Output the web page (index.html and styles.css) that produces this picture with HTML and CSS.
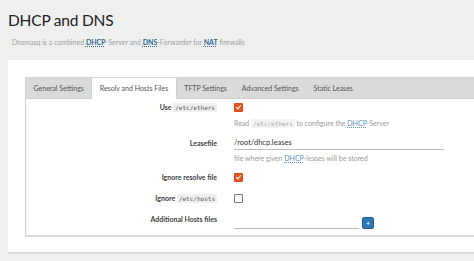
FILE: index.html
```html
<!DOCTYPE html>
<html lang="en">
<head>
    <meta charset="UTF-8">
    <title>DHCP and DNS</title>
    <link rel="stylesheet" href="styles.css">
</head>
<body>
    <div class="page-head">
        <h1>DHCP and DNS</h1>
        <p class="map-descr">Dnsmasq is a combined <abbr>DHCP</abbr>-Server and <abbr>DNS</abbr>-Forwarder for <abbr>NAT</abbr> firewalls</p>
    </div>
    <div class="cbi-map">
        <div class="cbi-section">
            <ul class="tabs">
                <li>General Settings</li>
                <li class="active">Resolv and Hosts Files</li>
                <li>TFTP Settings</li>
                <li>Advanced Settings</li>
                <li>Static Leases</li>
            </ul>
            <div class="fields">
                <div class="row">
                    <label>Use <code>/etc/ethers</code></label>
                    <div class="value">
                        <span class="check on"></span>
                        <div class="help first">Read <code>/etc/ethers</code> to configure the <abbr class="light">DHCP</abbr>-Server</div>
                    </div>
                </div>
                <div class="row">
                    <label>Leasefile</label>
                    <div class="value">
                        <div class="input long">/root/dhcp.leases</div>
                        <div class="help">file where given <abbr class="light">DHCP</abbr>-leases will be stored</div>
                    </div>
                </div>
                <div class="row">
                    <label>Ignore resolve file</label>
                    <div class="value"><span class="check on"></span></div>
                </div>
                <div class="row">
                    <label>Ignore <code>/etc/hosts</code></label>
                    <div class="value"><span class="check"></span></div>
                </div>
                <div class="row last">
                    <label>Additional Hosts files</label>
                    <div class="value inline">
                        <div class="input short"></div>
                        <button>+</button>
                    </div>
                </div>
            </div>
        </div>
    </div>
</body>
</html>
```

FILE: styles.css
```css
body {
    font-family: 'Lato', 'Liberation Sans', sans-serif;
    margin: 0;
    padding: 0;
    background: #efefef;
    color: #404040;
    overflow: hidden;
}

.page-head {
    padding: 10px 8px 0 8px;
    height: 50px;
}

h1 {
    font-size: 15.5px;
    font-weight: normal;
    color: #222;
    margin: 0;
    line-height: 20px;
    letter-spacing: -0.2px;
}

.map-descr {
    font-size: 7px;
    color: #a0a0a0;
    margin: 8px 0 0 4px;
}

abbr {
    color: #2c6a93;
    font-weight: bold;
    text-decoration: underline;
    text-decoration-style: dotted;
}

abbr.light {
    font-weight: normal;
    color: #5a8fbf;
}

.cbi-map {
    background: #fff;
    margin-left: 8px;
    padding: 17px 0 15px 17px;
    border-bottom: 2px solid #dcdcdc;
}

.cbi-section {
    border: 1px solid #d4d4d4;
    border-right: none;
    border-bottom: 2px solid #d8d8d8;
    padding-bottom: 6px;
}

.tabs {
    list-style: none;
    margin: 0;
    padding: 0;
    display: flex;
    background: #dadada;
    height: 20px;
    border-bottom: 1px solid #cfcfcf;
}

.tabs li {
    font-size: 7px;
    color: #555;
    padding: 0 7.5px;
    line-height: 20px;
}

.tabs li.active {
    background: #fff;
    border-left: 1px solid #cfcfcf;
    border-right: 1px solid #cfcfcf;
    height: 21px;
}

.fields {
    padding-top: 2px;
}

.row {
    display: grid;
    grid-template-columns: 191px 1fr;
    column-gap: 17px;
    margin-bottom: 8px;
}

.row.last {
    margin-top: 8px;
    margin-bottom: 0;
}

.row label {
    text-align: right;
    font-size: 7px;
    font-weight: bold;
    color: #404040;
    line-height: 13px;
}

.row label code {
    font-weight: normal;
}

code {
    font-family: 'DejaVu Sans Mono', monospace;
    font-size: 6px;
    background: #efefef;
    padding: 1px 2px;
    color: #555;
}

.value {
    font-size: 7px;
}

.value.inline {
    display: flex;
    align-items: flex-end;
    gap: 3px;
    padding-top: 3px;
}

.check {
    display: block;
    width: 7px;
    height: 7px;
    margin-top: 2px;
    border: 1px solid #777;
    border-radius: 1px;
    background: #fff;
    position: relative;
}

.check.on {
    background: #e8541f;
    border-color: #d44a18;
}

.check.on::after {
    content: "";
    position: absolute;
    left: 2px;
    top: 0;
    width: 2px;
    height: 4px;
    border-right: 1.5px solid #fff;
    border-bottom: 1.5px solid #fff;
    transform: rotate(40deg);
}

.help {
    color: #9a9a9a;
    margin-top: 2px;
    margin-bottom: -1px;
    line-height: 12px;
}

.help.first {
    margin-top: 5px;
}

.help code {
    color: #aaa;
    background: #f3f3f3;
}

.input {
    border-bottom: 1px solid #bbb;
    height: 12px;
    line-height: 12px;
    color: #333;
    font-size: 7.5px;
}

.input.long {
    width: 210px;
}

.input.short {
    width: 125px;
}

button {
    background-color: #2f79b6;
    color: #fff;
    border: 1px solid #245e8f;
    border-radius: 2px;
    width: 12px;
    height: 12px;
    font-size: 7px;
    padding: 0;
    line-height: 9px;
}
```
